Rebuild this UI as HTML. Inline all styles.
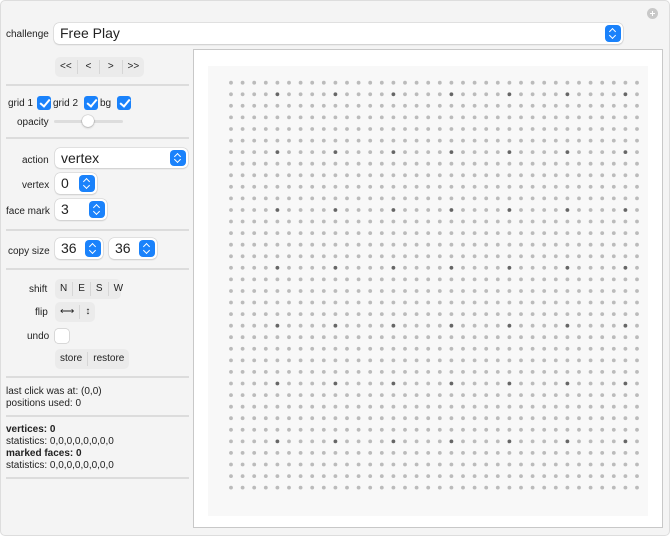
<!DOCTYPE html>
<html><head><meta charset="utf-8"><style>
*{box-sizing:border-box;margin:0;padding:0}
body{width:670px;height:536px;background:#fff;font-family:"Liberation Sans",sans-serif;color:#222;position:relative;overflow:hidden}
#win{position:absolute;left:0;top:0;width:670px;height:536px;background:#f4f4f4;border:1px solid #ddd;border-radius:5px}
.a{position:absolute}
.t{position:absolute;font-size:10px;white-space:nowrap}
.sel{position:absolute;background:#fff;border-radius:5px;box-shadow:0 0 0 .5px #ccc,0 1px 1.5px rgba(0,0,0,.15);font-size:14px;padding-left:6px;line-height:20px}
.sel .b{position:absolute;right:2px;top:2px;width:16px;bottom:2px;background:#1a82fb;border-radius:4px}
.sel .b:before{content:"";position:absolute;left:5px;top:4px;width:4px;height:4px;border-left:1.5px solid #fff;border-top:1.5px solid #fff;transform:rotate(45deg)}
.sel .b:after{content:"";position:absolute;left:5px;bottom:4px;width:4px;height:4px;border-right:1.5px solid #fff;border-bottom:1.5px solid #fff;transform:rotate(45deg)}
.hr{position:absolute;left:6px;width:183px;height:2px;background:#dcdcdc}
.seg{position:absolute;background:#ebebeb;border-radius:5px;display:flex;font-size:10px;line-height:20px;height:20px}
.seg span{padding:0 5px;border-left:1px solid #d6d6d6;line-height:14px;margin:3px 0}
.seg span:first-child{border-left:none}
.cb{position:absolute;width:14px;height:14px;background:#1a82fb;border-radius:3px}
.cb:after{content:"";position:absolute;left:4.5px;top:1px;width:4px;height:8px;border-right:2px solid #fff;border-bottom:2px solid #fff;transform:rotate(40deg)}
</style></head><body>
<div id="win"></div>
<div class="a" style="left:647px;top:8px;width:11px;height:11px;border-radius:50%;background:#c8c8c8"></div>
<div class="a" style="left:650px;top:12.5px;width:5px;height:1.6px;background:#fff"></div>
<div class="a" style="left:651.7px;top:10.8px;width:1.6px;height:5px;background:#fff"></div>

<div class="t" style="left:6px;top:29px">challenge</div>
<div class="sel" style="left:54px;top:23px;width:569px;height:21px">Free Play<div class="b"></div></div>

<div class="seg" style="left:55px;top:57px;width:89px"><span>&lt;&lt;</span><span>&nbsp;&lt;&nbsp;</span><span>&nbsp;&gt;&nbsp;</span><span>&gt;&gt;</span></div>
<div class="hr" style="top:84px"></div>
<div class="t" style="left:8px;top:98px">grid 1</div><div class="cb" style="left:37px;top:96px"></div>
<div class="t" style="left:53px;top:98px">grid 2</div><div class="cb" style="left:84px;top:96px"></div>
<div class="t" style="left:100px;top:98px">bg</div><div class="cb" style="left:117px;top:96px"></div>
<div class="t" style="left:17px;top:117px">opacity</div>
<div class="a" style="left:54px;top:120px;width:69px;height:3px;background:#ddd;border-radius:2px"></div>
<div class="a" style="left:82px;top:115px;width:12px;height:12px;border-radius:50%;background:#fff;box-shadow:0 0 1px rgba(0,0,0,.5),0 1px 2px rgba(0,0,0,.2)"></div>
<div class="hr" style="top:137px"></div>
<div class="t" style="left:22px;top:155px">action</div>
<div class="sel" style="left:55px;top:148px;width:133px;height:20px">vertex<div class="b"></div></div>
<div class="t" style="left:22px;top:180px">vertex</div>
<div class="sel" style="left:55px;top:173px;width:42px;height:21px">0<div class="b"></div></div>
<div class="t" style="left:6px;top:206px">face mark</div>
<div class="sel" style="left:55px;top:199px;width:52px;height:21px">3<div class="b"></div></div>
<div class="hr" style="top:229px"></div>
<div class="t" style="left:8px;top:246px">copy size</div>
<div class="sel" style="left:55px;top:238px;width:48px;height:21px">36<div class="b"></div></div>
<div class="sel" style="left:109px;top:238px;width:48px;height:21px">36<div class="b"></div></div>
<div class="hr" style="top:268px"></div>
<div class="t" style="left:29px;top:284px">shift</div>
<div class="seg" style="left:55px;top:279px;width:66px"><span>N</span><span>E</span><span>S</span><span>W</span></div>
<div class="t" style="left:35px;top:307px">flip</div>
<div class="seg" style="left:55px;top:302px;width:40px"><span>⟷</span><span>↕</span></div>
<div class="t" style="left:27px;top:331px">undo</div>
<div class="a" style="left:55px;top:329px;width:14px;height:14px;background:#fff;border-radius:3px;box-shadow:0 0 0 .5px #bbb"></div>
<div class="seg" style="left:55px;top:349px;width:74px"><span>store</span><span>restore</span></div>
<div class="hr" style="top:376px"></div>
<div class="t" style="left:6px;top:386px">last click was at: (0,0)</div>
<div class="t" style="left:6px;top:398px">positions used: 0</div>
<div class="hr" style="top:415px"></div>
<div class="t" style="left:6px;top:424px;font-weight:bold">vertices: 0</div>
<div class="t" style="left:6px;top:436px">statistics: 0,0,0,0,0,0,0,0</div>
<div class="t" style="left:6px;top:448px;font-weight:bold">marked faces: 0</div>
<div class="t" style="left:6px;top:460px">statistics: 0,0,0,0,0,0,0,0</div>
<div class="hr" style="top:477px"></div>

<div class="a" style="left:193px;top:49px;width:470px;height:479px;background:#fff;border:1px solid #c8c8c8"></div>
<div class="a" style="left:208px;top:66px;width:440px;height:450px;background:#f8f8f8"></div>
<svg class="a" style="left:0;top:0" width="670" height="536" id="g"></svg>
<script>
var s='';for(var r=0;r<36;r++)for(var c=0;c<36;c++){var d=(r%5==1&&c%5==4);s+='<circle cx="'+(231+c*11.6).toFixed(1)+'" cy="'+(82.7+r*11.57).toFixed(1)+'" r="1.9" fill="'+(d?'#666':'#bbb')+'"/>';}
document.getElementById('g').innerHTML=s;
</script>
</body></html>
